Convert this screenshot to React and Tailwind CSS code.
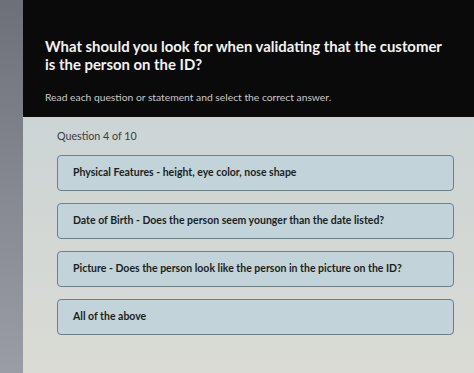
export default function App() {
  const options = [
    "Physical Features - height, eye color, nose shape",
    "Date of Birth - Does the person seem younger than the date listed?",
    "Picture - Does the person look like the person in the picture on the ID?",
    "All of the above",
  ];
  return (
    <div className="flex w-[474px] h-[373px] overflow-hidden bg-[#0b0b0d]" style={{ fontFamily: "Lato, 'Open Sans', sans-serif" }}>
      <div className="w-[23px] shrink-0 bg-gradient-to-b from-[#6e7079] via-[#858791] to-[#9a9ca6]" />
      <div className="flex flex-col flex-1">
        <div className="h-[117px] shrink-0 bg-[#0a0a0b] pl-[22px] pr-[26px] pt-[37px]">
          <h1 className="text-[14.9px] leading-[18px] font-bold text-[#f2f2f2]">
            What should you look for when validating that the customer is the person on the ID?
          </h1>
          <p className="mt-[17px] text-[10.3px] text-[#c9c9c9]">Read each question or statement and select the correct answer.</p>
        </div>
        <div className="flex-1 flex flex-col bg-gradient-to-b from-[#ccd4d5] to-[#dadbd4] pl-[34px] pr-[20px] pt-[12px]">
          <div className="text-[10.7px] text-[#3a3d40] leading-[14px]">Question 4 of 10</div>
          <div className="flex flex-col gap-[12px] mt-[12px]">
            {options.map((o) => (
              <div key={o} className="h-[36px] flex items-center rounded-[4px] border border-[#6f7f86] bg-[#c2d3d9] pl-[15px] text-[10.5px] font-bold text-[#1c1f22]">
                {o}
              </div>
            ))}
          </div>
        </div>
      </div>
    </div>
  );
}
